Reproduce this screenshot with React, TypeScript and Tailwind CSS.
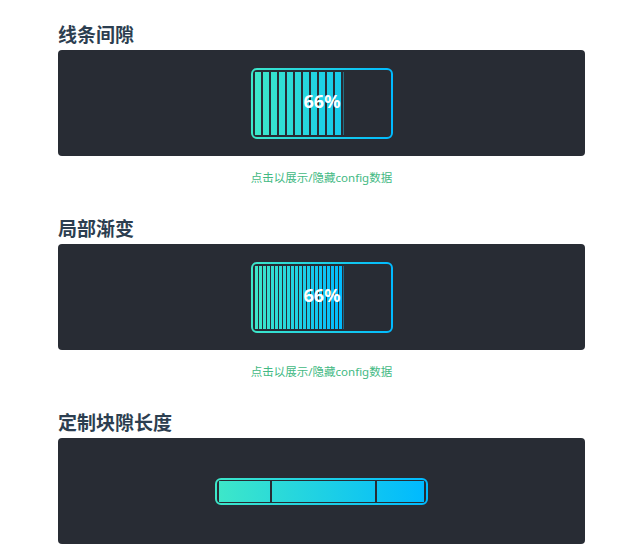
import { ReactNode } from 'react';

const FROM = '#3DE7C9';
const TO = '#00BAFF';

type PondProps = {
  id: string;
  width: number;
  height: number;
  value: number;
  bar?: number;
  gap?: number;
  localGradient?: boolean;
  segments?: [number, number][];
  showText?: boolean;
};

// progress pond: gradient outline, dashed fill and a value label
function PercentPond({ id, width, height, value, bar = 6, gap = 2, localGradient, segments, showText = true }: PondProps) {
  const pad = 4;
  const innerW = width - pad * 2;
  const fillW = innerW * (value / 100);
  const top = segments ? 3 : pad;
  const bottom = segments ? height - 3 : height - pad;

  const rects: ReactNode[] = [];
  if (segments) {
    segments.forEach(([x0, x1], i) => {
      rects.push(<rect key={i} x={x0} y={top} width={x1 - x0} height={bottom - top} fill={`url(#${id}-fill)`} />);
    });
  } else {
    for (let x = pad; x < pad + fillW; x += bar + gap) {
      const w = Math.min(bar, pad + fillW - x);
      rects.push(<rect key={x} x={x} y={top} width={w} height={bottom - top} fill={`url(#${id}-fill)`} />);
    }
  }

  return (
    <svg width={width} height={height} viewBox={`0 0 ${width} ${height}`}>
      <defs>
        <linearGradient id={`${id}-border`} x1="0" y1="0" x2={width} y2="0" gradientUnits="userSpaceOnUse">
          <stop offset="0" stopColor={FROM} />
          <stop offset="1" stopColor={TO} />
        </linearGradient>
        <linearGradient
          id={`${id}-fill`}
          x1={pad}
          y1="0"
          x2={localGradient ? pad + fillW : pad + innerW}
          y2="0"
          gradientUnits="userSpaceOnUse"
        >
          <stop offset="0" stopColor={FROM} />
          <stop offset="1" stopColor={TO} />
        </linearGradient>
      </defs>
      <rect x="1" y="1" width={width - 2} height={height - 2} rx="5" fill="none" stroke={`url(#${id}-border)`} strokeWidth="2" />
      {rects}
      {showText && (
        <text
          x={width / 2}
          y={height / 2}
          textAnchor="middle"
          dominantBaseline="middle"
          fill="#fff"
          fontSize="18"
          fontWeight="700"
          fontFamily="'Noto Sans', 'Liberation Sans', sans-serif"
        >
          {value}%
        </text>
      )}
    </svg>
  );
}

function Demo({ title, children, toggle = true }: { title: string; children: ReactNode; toggle?: boolean }) {
  return (
    <section className="mb-[29px]">
      <h2 className="text-[19px] leading-[24px] font-bold text-[#2c3e50] mb-[3px]">{title}</h2>
      <div className="h-[106px] rounded-[4px] bg-[#282c34] flex items-center justify-center">{children}</div>
      {toggle && (
        <p className="mt-[12px] text-center text-[11.5px] leading-[20px] text-[#42b983] cursor-pointer">
          点击以展示/隐藏config数据
        </p>
      )}
    </section>
  );
}

export default function App() {
  return (
    <div
      className="min-h-screen bg-white pt-[23px] pl-[58px]"
      style={{ fontFamily: "'Noto Sans', 'Noto Sans CJK SC', sans-serif" }}
    >
      <div className="w-[527px]">
        <Demo title="线条间隙">
          <PercentPond id="p1" width={142} height={71} value={66} bar={6} gap={2} />
        </Demo>
        <Demo title="局部渐变">
          <PercentPond id="p2" width={142} height={71} value={66} bar={3} gap={1} localGradient />
        </Demo>
        <Demo title="定制块隙长度" toggle={false}>
          <PercentPond
            id="p3"
            width={213}
            height={27}
            value={100}
            showText={false}
            segments={[[4, 55], [57, 160], [162, 209]]}
          />
        </Demo>
      </div>
    </div>
  );
}
